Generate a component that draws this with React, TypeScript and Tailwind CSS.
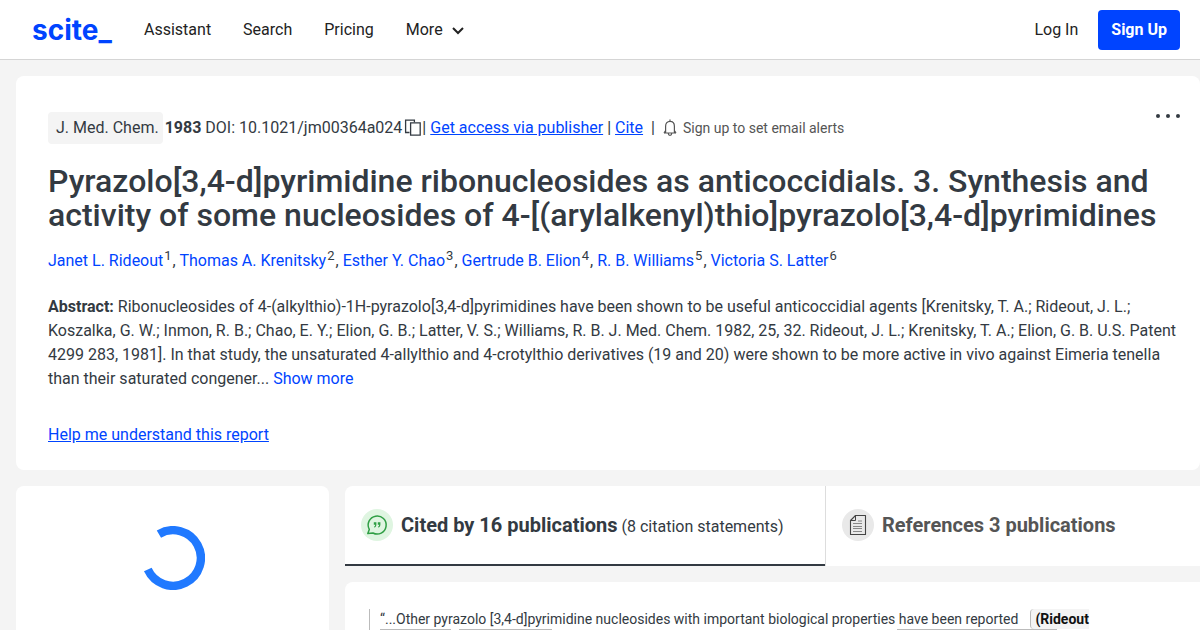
const navItems = ["Assistant", "Search", "Pricing"];

const authors = [
  "Janet L. Rideout",
  "Thomas A. Krenitsky",
  "Esther Y. Chao",
  "Gertrude B. Elion",
  "R. B. Williams",
  "Victoria S. Latter",
];

const CopyIcon = () => (
  <svg width="18" height="18" viewBox="0 0 18 18" fill="none" stroke="currentColor" strokeWidth="1.3">
    <path d="M5.5 13.5H1.6V1.2H10.4V3.2" />
    <path d="M6.6 3.9H16.2V16.2H6.6Z" />
  </svg>
);

const BellIcon = () => (
  <svg width="14" height="18" viewBox="0 0 14 18" fill="none" stroke="currentColor" strokeWidth="1.2">
    <path d="M7 0.6V2.2M1 14H13M2.6 13.8V7.2C2.6 4.4 4.3 2.3 7 2.3S11.4 4.4 11.4 7.2V13.8M5.3 14.4C5.4 16.9 8.6 16.9 8.7 14.4" />
    <path d="M2.6 11.6L1 14M11.4 11.6L13 14" />
  </svg>
);

const CitedIcon = () => (
  <svg className="shrink-0" width="32" height="32" viewBox="0 0 32 32" fill="none">
    <circle cx="16" cy="16" r="16" fill="#dff5e1" />
    <path
      d="M6.8 24.6L8.3 20.4A9 9 0 1 1 12 24Z"
      stroke="#2f9e44"
      strokeWidth="1.5"
      strokeLinejoin="round"
    />
    <path
      d="M12.8 13.2H15.4V15.4C15.4 17 14.7 18 13.3 18.5L13 17.8C13.8 17.4 14.2 16.7 14.2 15.8H12.8ZM16.8 13.2H19.4V15.4C19.4 17 18.7 18 17.3 18.5L17 17.8C17.8 17.4 18.2 16.7 18.2 15.8H16.8Z"
      fill="#2f9e44"
    />
  </svg>
);

const ReferencesIcon = () => (
  <svg className="shrink-0" width="32" height="32" viewBox="0 0 32 32" fill="none">
    <circle cx="16" cy="16" r="16" fill="#e9e9e9" />
    <path d="M13.5 6.5H23.5V25.5H8.5V11.5Z" stroke="#444" strokeWidth="1.1" strokeLinejoin="round" />
    <path d="M13.5 6.5V11.5H8.5" stroke="#444" strokeWidth="1" />
    <path d="M16 12H20M11 14.5H20M11 17.5H20M11 19.5H20M11 22.5H20" stroke="#888" strokeWidth="1.1" />
  </svg>
);

const Spinner = () => (
  <svg width="64" height="64" viewBox="0 0 64 64" fill="none" aria-label="Loading">
    <path d="M17.9 8.1A27.8 27.8 0 1 1 6.8 43.6" stroke="#2079ff" strokeWidth="8.4" />
  </svg>
);

const Header = () => {
  return (
    <header className="flex h-15 items-center border-b border-[#d5d5d5] bg-white pr-5 pl-8 text-[#222]">
      <a href="#" className="w-28 font-['Inter'] text-[28px] leading-9 font-bold text-[#0044ff]">
        scite_
      </a>
      <nav className="flex flex-1 items-center gap-8">
        {navItems.map((item) => (
          <a key={item} href="#">
            {item}
          </a>
        ))}
        <button className="flex items-center gap-2">
          More
          <svg width="14" height="14" viewBox="0 0 14 14" fill="none" stroke="currentColor" strokeWidth="2">
            <path d="M2 5L7 10L12 5" />
          </svg>
        </button>
      </nav>
      <a href="#" className="mr-5">
        Log In
      </a>
      <button className="h-10 rounded bg-[#0044ff] px-[13px] font-bold text-white">Sign Up</button>
    </header>
  );
};

const PaperSummary = () => {
  return (
    <section className="rounded-lg bg-white px-8 pt-9 pb-[23px]">
      <div className="flex h-8 items-center">
        <span className="rounded bg-[#f4f4f4] py-1 pr-1 pl-2">J. Med. Chem.</span>
        <strong className="ml-0.5">1983</strong>
        <span className="ml-1">DOI: 10.1021/jm00364a024</span>
        <button className="ml-0.5" aria-label="Copy DOI">
          <CopyIcon />
        </button>
        <span>|</span>
        <a href="#" className="ml-1 text-[#0044ff] underline">
          Get access via publisher
        </a>
        <span className="mx-1">|</span>
        <a href="#" className="text-[#0044ff] underline">
          Cite
        </a>
        <span className="mx-2">|</span>
        <button className="flex items-center gap-1.5 text-sm text-[#555]">
          <BellIcon />
          Sign up to set email alerts
        </button>
        <button className="mb-6 ml-auto -mr-3" aria-label="More options">
          <svg width="24" height="6" viewBox="0 0 24 6" fill="#333a42">
            <circle cx="2" cy="3" r="2" />
            <circle cx="12" cy="3" r="2" />
            <circle cx="22" cy="3" r="2" />
          </svg>
        </button>
      </div>

      <h1 className="mt-5 text-[32px] leading-[34px] font-medium whitespace-nowrap">
        Pyrazolo[3,4-d]pyrimidine ribonucleosides as anticoccidials. 3. Synthesis and
        <br />
        activity of some nucleosides of 4-[(arylalkenyl)thio]pyrazolo[3,4-d]pyrimidines
      </h1>

      <p className="mt-[17px] leading-6">
        {authors.map((author, i) => (
          <span key={author}>
            <a href="#" className="text-[#0044ff]">
              {author}
            </a>
            <sup className="px-px text-[13px]">{i + 1}</sup>
            {i < authors.length - 1 && ", "}
          </span>
        ))}
      </p>

      <p className="mt-5.5 leading-6 whitespace-nowrap">
        <strong>Abstract:</strong> Ribonucleosides of 4-(alkylthio)-1H-pyrazolo[3,4-d]pyrimidines have been shown to be
        useful anticoccidial agents [Krenitsky, T. A.; Rideout, J. L.;
        <br />
        Koszalka, G. W.; Inmon, R. B.; Chao, E. Y.; Elion, G. B.; Latter, V. S.; Williams, R. B. J. Med. Chem. 1982, 25,
        32. Rideout, J. L.; Krenitsky, T. A.; Elion, G. B. U.S. Patent
        <br />
        4299 283, 1981]. In that study, the unsaturated 4-allylthio and 4-crotylthio derivatives (19 and 20) were shown
        to be more active in vivo against Eimeria tenella
        <br />
        than their saturated congener...{" "}
        <button className="text-[#0044ff]">Show more</button>
      </p>

      <a href="#" className="mt-8 inline-block leading-6 text-[#0044ff] underline">
        Help me understand this report
      </a>
    </section>
  );
};

const Tabs = () => {
  return (
    <div className="flex h-20 overflow-hidden rounded-tl-lg bg-white whitespace-nowrap">
      <button className="flex w-[480px] items-center gap-2 border-b-2 border-[#333a42] px-4">
        <CitedIcon />
        <span>
          <span className="text-xl font-bold">Cited by 16 publications</span> (8 citation statements)
        </span>
      </button>
      <button className="flex flex-1 items-center gap-2 border-l border-[#ddd] px-4 pb-0.5 text-[#555]">
        <ReferencesIcon />
        <span className="text-xl font-bold">References 3 publications</span>
      </button>
    </div>
  );
};

const CitationStatement = () => {
  return (
    <article className="mt-4 flex-1 rounded-tl-lg bg-white pt-[27px] pl-6">
      <blockquote className="border-l border-[#bbb] pl-[10px] text-sm leading-5 whitespace-nowrap">
        <p className="flex">
          <span>
            “...Other pyrazolo [3,4-d]pyrimidine nucleosides with important biological properties have been reported
          </span>
          <strong className="ml-3 rounded-l border-l border-[#bbb] bg-[#f4f4f4] pl-1 text-[#111]">(Rideout</strong>
        </p>
        <div className="flex h-px">
          <span className="w-[71px] bg-[#bbb]" />
          <span className="ml-2 w-[93px] bg-[#bbb]" />
          <span className="ml-[345px] w-40 bg-[#bbb]" />
        </div>
      </blockquote>
    </article>
  );
};

const App = () => {
  return (
    <div className="flex min-h-screen flex-col bg-[#f4f4f4] font-['Roboto','Liberation_Sans',sans-serif] text-base text-[#333a42]">
      <Header />
      <main className="flex flex-1 flex-col gap-4 pt-4 pl-4">
        <PaperSummary />
        <div className="flex flex-1 gap-4">
          <aside className="flex w-[313px] shrink-0 justify-center rounded-t-lg bg-white pt-10">
            <Spinner />
          </aside>
          <section className="flex min-w-0 flex-1 flex-col">
            <Tabs />
            <CitationStatement />
          </section>
        </div>
      </main>
    </div>
  );
};

export default App;
